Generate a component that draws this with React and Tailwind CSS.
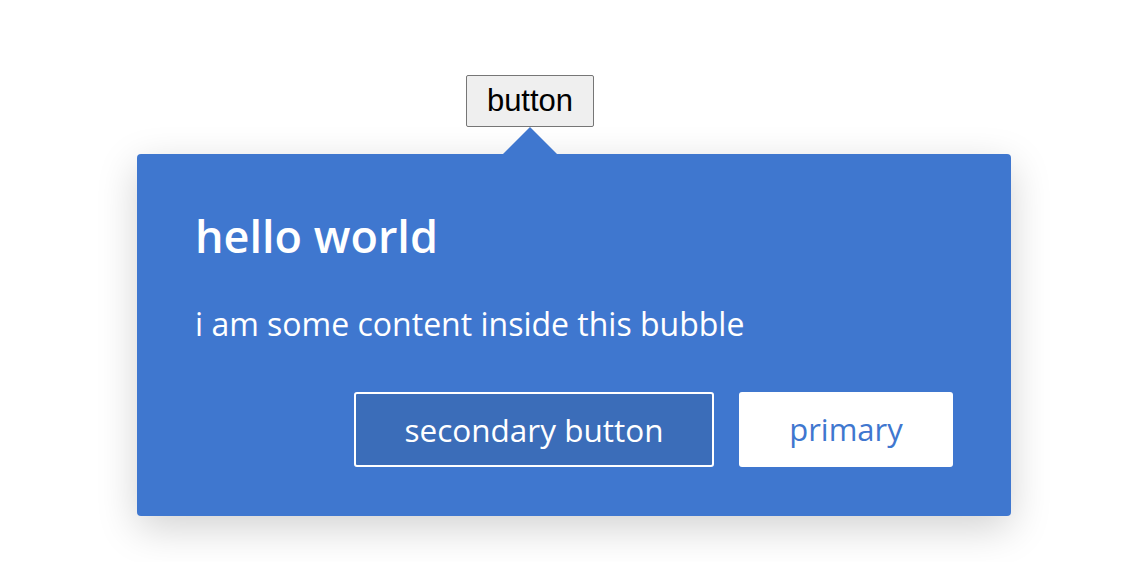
export default function App() {
  return (
    <div className="min-h-[562px] bg-white pt-[75px] font-['Open_Sans',sans-serif]">
      <div className="pl-[466px]">
        <button className="h-[52px] w-[128px] rounded-[2px] border border-[#767676] bg-[#efefef] pb-[2px] font-['Liberation_Sans',Arial,sans-serif] text-[31px] leading-none text-black">
          button
        </button>
      </div>
      <div className="ml-[137px] mt-[27px] w-[874px] relative">
        <div className="absolute left-[366px] top-[-27px] h-0 w-0 border-x-[27px] border-b-[27px] border-x-transparent border-b-[#3f77cf]" />
        <div className="rounded-[4px] bg-[#3f77cf] px-[58px] pt-[50px] pb-[49px] text-white shadow-[0_12px_40px_rgba(0,0,0,0.18)]">
          <h1 className="text-[45px] font-semibold leading-[64px]">hello world</h1>
          <p className="mt-[34px] text-[32px] leading-[44px]">i am some content inside this bubble</p>
          <div className="mt-[46px] flex justify-end gap-[25px]">
            <button className="h-[75px] w-[360px] rounded-[3px] border-2 border-white bg-[#3b6db9] text-[31.5px] text-white">
              secondary button
            </button>
            <button className="h-[75px] w-[214px] rounded-[3px] bg-white text-[31px] text-[#3f77cf]">
              primary
            </button>
          </div>
        </div>
      </div>
    </div>
  )
}
